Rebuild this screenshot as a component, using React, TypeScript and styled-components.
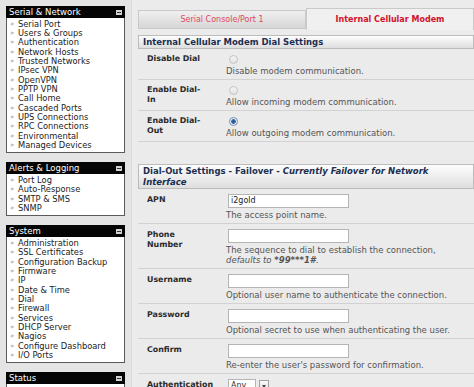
import React from 'react';
import styled, { createGlobalStyle } from 'styled-components';

const GlobalStyle = createGlobalStyle`
  html, body {
    margin: 0;
    padding: 0;
    background: #e4e4e4;
    font-family: 'DejaVu Sans', Verdana, sans-serif;
    font-size: 8px;
    color: #333;
  }
`;

const Page = styled.div`
  display: flex;
  width: 474px;
  height: 387px;
  overflow: hidden;
`;

const Sidebar = styled.div`
  width: 131px;
  flex: none;
  padding: 6px 0 0 6px;
  box-sizing: border-box;
  display: flex;
  flex-direction: column;
  gap: 9.5px;
`;

const Panel = styled.div`
  width: 119px;
`;

const PanelHead = styled.div`
  height: 12px;
  background: #050505;
  color: #fff;
  font-size: 8.5px;
  line-height: 12px;
  padding: 0 3px;
  display: flex;
  align-items: center;
  justify-content: space-between;
`;

const Collapse = styled.span`
  width: 6px;
  height: 5px;
  background: #d4d4d4;
  display: flex;
  align-items: center;
  justify-content: center;

  &::after {
    content: '';
    width: 4px;
    height: 1px;
    background: #333;
  }
`;

const PanelBody = styled.ul`
  list-style: none;
  margin: 0;
  padding: 1px 0 2px 3px;
  background: #fff;
  border: 1px solid #5a5a5a;
  border-top: none;
  min-height: 4px;
`;

const NavItem = styled.li`
  display: flex;
  align-items: center;
  height: 9.35px;
  font-size: 8.3px;
  color: #222;
  white-space: nowrap;

  &::before {
    content: '»';
    color: #8294b4;
    font-size: 7px;
    width: 8px;
    flex: none;
  }
`;

const Main = styled.div`
  flex: 1;
  padding: 7px 0 0 6px;
  background: #ebebeb;
  border-left: 1px solid #dcdcdc;
`;

const Tabs = styled.div`
  display: flex;
  align-items: flex-end;
  height: 22px;
`;

const Tab = styled.div<{ $active?: boolean }>`
  flex: 1;
  height: ${(p) => (p.$active ? '22px' : '19px')};
  display: flex;
  align-items: center;
  justify-content: center;
  font-size: 8px;
  box-sizing: border-box;
  color: ${(p) => (p.$active ? '#d2102c' : '#e2485c')};
  font-weight: ${(p) => (p.$active ? 'bold' : 'normal')};
  background: ${(p) =>
    p.$active ? '#f0f0f0' : 'linear-gradient(#f0f0f0, #d6d6d6)'};
  border: 1px solid #c9c9c9;
  border-bottom: ${(p) => (p.$active ? 'none' : '1px solid #c9c9c9')};
  margin-bottom: ${(p) => (p.$active ? '-1px' : '0')};
`;

const SectionHead = styled.div<{ $gap?: number }>`
  margin-top: ${(p) => p.$gap ?? 6}px;
  border: 1px solid #bcbcbc;
  background: linear-gradient(#fdfdfd, #dedede);
  color: #1c2e50;
  font-weight: bold;
  font-size: 8.5px;
  line-height: 11px;
  padding: 0.5px 4px;
`;

const Row = styled.div`
  display: flex;
  border-bottom: 1px solid #d2d2d2;
  padding: 4px 0 3px 9px;
`;

const Label = styled.div`
  width: 79px;
  flex: none;
  font-weight: bold;
  font-size: 7.9px;
  color: #2a2a2a;
  line-height: 10px;
  padding-top: 1px;
`;

const Value = styled.div`
  flex: 1;
  display: flex;
  flex-direction: column;
  align-items: flex-start;
`;

const Radio = styled.span<{ $checked?: boolean }>`
  width: 7px;
  height: 7px;
  margin: 2px 0 2px 3px;
  border-radius: 50%;
  border: 1px solid ${(p) => (p.$checked ? '#7a90b0' : '#c4c4c4')};
  background: ${(p) =>
    p.$checked
      ? 'radial-gradient(circle, #2a5fa0 0 2px, #e8eef6 2.5px)'
      : 'linear-gradient(#f4f4f4, #e2e2e2)'};
`;

const Desc = styled.div`
  color: #555;
  font-size: 8.5px;
  line-height: 10px;
  white-space: nowrap;
`;

const Field = styled.div`
  width: 121px;
  height: 14px;
  box-sizing: border-box;
  background: #fff;
  border: 1px solid #b4b4b4;
  padding: 0 2px;
  line-height: 12px;
  color: #222;
  margin: 0 0 2px 2px;
`;

const InputRow = styled(Row)`
  padding: 5px 0 3px 9px;
`;

const SelectBox = styled.div`
  display: flex;
  align-items: center;
  gap: 3px;
  margin: 1px 0 0 2px;
  height: 12px;
`;

const SelectValue = styled.span`
  width: 22px;
  height: 12px;
  background: #fff;
  border: 1px solid #b4b4b4;
  padding: 0 2px;
  line-height: 11px;
`;

const SelectButton = styled.span`
  width: 8px;
  height: 10px;
  border: 1px solid #a0a0a0;
  background: linear-gradient(#fafafa, #dcdcdc);
  display: flex;
  align-items: center;
  justify-content: center;

  &::after {
    content: '';
    border-left: 2px solid transparent;
    border-right: 2px solid transparent;
    border-top: 3px solid #444;
  }
`;

const Italic = styled.em`
  font-style: italic;
`;

const nav = [
  {
    title: 'Serial & Network',
    items: [
      'Serial Port',
      'Users & Groups',
      'Authentication',
      'Network Hosts',
      'Trusted Networks',
      'IPsec VPN',
      'OpenVPN',
      'PPTP VPN',
      'Call Home',
      'Cascaded Ports',
      'UPS Connections',
      'RPC Connections',
      'Environmental',
      'Managed Devices',
    ],
  },
  {
    title: 'Alerts & Logging',
    items: ['Port Log', 'Auto-Response', 'SMTP & SMS', 'SNMP'],
  },
  {
    title: 'System',
    items: [
      'Administration',
      'SSL Certificates',
      'Configuration Backup',
      'Firmware',
      'IP',
      'Date & Time',
      'Dial',
      'Firewall',
      'Services',
      'DHCP Server',
      'Nagios',
      'Configure Dashboard',
      'I/O Ports',
    ],
  },
  { title: 'Status', items: [] },
];

const dialModes = [
  { label: ['Disable Dial'], desc: 'Disable modem communication.' },
  { label: ['Enable Dial-', 'In'], desc: 'Allow incoming modem communication.' },
  { label: ['Enable Dial-', 'Out'], desc: 'Allow outgoing modem communication.', checked: true },
];

const fields = [
  { label: 'Username', desc: 'Optional user name to authenticate the connection.' },
  { label: 'Password', desc: 'Optional secret to use when authenticating the user.' },
  { label: 'Confirm', desc: "Re-enter the user's password for confirmation." },
];

function Lines({ lines }: { lines: string[] }) {
  return (
    <>
      {lines.map((l, i) => (
        <React.Fragment key={i}>
          {i > 0 && <br />}
          {l}
        </React.Fragment>
      ))}
    </>
  );
}

export default function App() {
  return (
    <>
      <GlobalStyle />
      <Page>
        <Sidebar>
          {nav.map((group) => (
            <Panel key={group.title}>
              <PanelHead>
                {group.title}
                <Collapse />
              </PanelHead>
              <PanelBody>
                {group.items.map((item) => (
                  <NavItem key={item}>{item}</NavItem>
                ))}
              </PanelBody>
            </Panel>
          ))}
        </Sidebar>
        <Main>
          <Tabs>
            <Tab>Serial Console/Port 1</Tab>
            <Tab $active>Internal Cellular Modem</Tab>
          </Tabs>
          <SectionHead>Internal Cellular Modem Dial Settings</SectionHead>
          {dialModes.map((m) => (
            <Row key={m.desc}>
              <Label>
                <Lines lines={m.label} />
              </Label>
              <Value>
                <Radio $checked={m.checked} />
                <Desc>{m.desc}</Desc>
              </Value>
            </Row>
          ))}
          <SectionHead $gap={22}>
            Dial-Out Settings - Failover - <Italic>Currently Failover for Network Interface</Italic>
          </SectionHead>
          <InputRow>
            <Label>APN</Label>
            <Value>
              <Field>i2gold</Field>
              <Desc>The access point name.</Desc>
            </Value>
          </InputRow>
          <InputRow>
            <Label>
              <Lines lines={['Phone', 'Number']} />
            </Label>
            <Value>
              <Field />
              <Desc>
                The sequence to dial to establish the connection,
                <br />
                <Italic>defaults to</Italic> <Italic as="b">*99***1#</Italic>.
              </Desc>
            </Value>
          </InputRow>
          {fields.map((f) => (
            <InputRow key={f.label}>
              <Label>{f.label}</Label>
              <Value>
                <Field />
                <Desc>{f.desc}</Desc>
              </Value>
            </InputRow>
          ))}
          <InputRow>
            <Label>Authentication</Label>
            <Value>
              <SelectBox>
                <SelectValue>Any</SelectValue>
                <SelectButton />
              </SelectBox>
            </Value>
          </InputRow>
        </Main>
      </Page>
    </>
  );
}
